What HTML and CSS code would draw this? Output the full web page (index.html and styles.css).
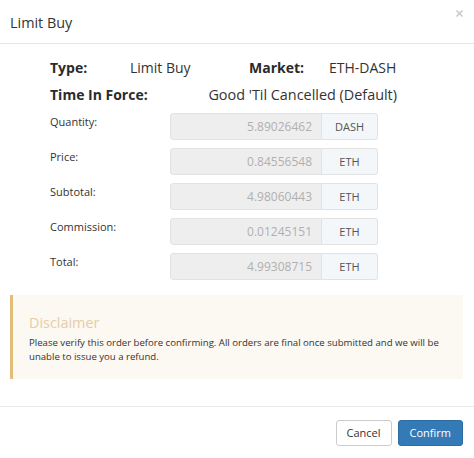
FILE: index.html
```html
<!DOCTYPE html>
<html lang="en">
<head>
<meta charset="utf-8">
<title>Limit Buy</title>
<link rel="stylesheet" href="styles.css">
</head>
<body>
<div class="modal">
  <div class="modal-header">
    <h4 class="modal-title">Limit Buy</h4>
    <span class="close" aria-label="Close">
      <svg width="7" height="7" viewBox="0 0 7 7"><path d="M0.5 0.5 L6.5 6.5 M6.5 0.5 L0.5 6.5" stroke="#c4c4c4" stroke-width="1.4" fill="none"/></svg>
    </span>
  </div>
  <div class="modal-body">
    <div class="summary">
      <div class="summary-row">
        <span class="key">Type:</span>
        <span class="val">Limit Buy</span>
        <span class="key">Market:</span>
        <span class="val">ETH-DASH</span>
      </div>
      <div class="summary-tif">
        <span class="key">Time In Force:</span>
        <span class="val">Good 'Til Cancelled (Default)</span>
      </div>
    </div>
    <div class="form">
      <div class="form-row">
        <span class="label">Quantity:</span>
        <div class="input-group"><span class="input">5.89026462</span><span class="addon">DASH</span></div>
      </div>
      <div class="form-row">
        <span class="label">Price:</span>
        <div class="input-group"><span class="input">0.84556548</span><span class="addon">ETH</span></div>
      </div>
      <div class="form-row">
        <span class="label">Subtotal:</span>
        <div class="input-group"><span class="input">4.98060443</span><span class="addon">ETH</span></div>
      </div>
      <div class="form-row">
        <span class="label">Commission:</span>
        <div class="input-group"><span class="input">0.01245151</span><span class="addon">ETH</span></div>
      </div>
      <div class="form-row">
        <span class="label">Total:</span>
        <div class="input-group"><span class="input">4.99308715</span><span class="addon">ETH</span></div>
      </div>
    </div>
    <div class="disclaimer">
      <h4 class="disclaimer-title">Disclaimer</h4>
      <p class="disclaimer-text">Please verify this order before confirming. All orders are final once submitted and we will be unable to issue you a refund.</p>
    </div>
  </div>
  <div class="modal-footer">
    <button class="btn btn-default">Cancel</button>
    <button class="btn btn-primary">Confirm</button>
  </div>
</div>
</body>
</html>
```

FILE: styles.css
```css
html, body {
  margin: 0;
  padding: 0;
  background: #fff;
}
body {
  font-family: "Open Sans", "DejaVu Sans", sans-serif;
  color: #333;
}
.modal {
  width: 474px;
}
.modal-header {
  height: 44px;
  box-sizing: border-box;
  padding: 0 11px 0 10px;
  border-bottom: 1px solid #e5e5e5;
  display: flex;
  justify-content: space-between;
  align-items: flex-start;
}
.modal-title {
  margin: 13px 0 0;
  font-size: 14.4px;
  line-height: 19px;
  font-weight: 400;
  color: #333;
}
.close {
  display: block;
  margin-top: 10px;
  width: 7px;
  height: 7px;
}
.close svg {
  display: block;
}
.modal-body {
  padding: 10px 11px 27px 10px;
}
.summary {
  margin-left: 40px;
  width: 347px;
  font-size: 14px;
  line-height: 27px;
  white-space: nowrap;
}
.summary-row {
  display: grid;
  grid-template-columns: 80px 119px 80px 1fr;
}
.summary-tif {
  display: flex;
  justify-content: space-between;
}
.summary-tif .val {
  font-size: 14.4px;
}
.key {
  font-weight: 700;
  color: #2b2b2b;
}
.val {
  color: #333;
}
.form {
  margin: 5px 0 0 40px;
  display: flex;
  flex-direction: column;
  gap: 8px;
}
.form-row {
  display: grid;
  grid-template-columns: 120px 208px;
}
.label {
  font-size: 11px;
  line-height: 15px;
  padding-top: 1px;
  color: #333;
}
.input-group {
  display: flex;
  height: 27px;
}
.input {
  flex: 1;
  box-sizing: border-box;
  background: #eeeeee;
  border: 1px solid #e2e2e2;
  border-radius: 3px 0 0 3px;
  font-size: 12px;
  line-height: 25px;
  text-align: right;
  padding-right: 9px;
  color: #b0b0b0;
}
.addon {
  width: 56px;
  box-sizing: border-box;
  background: #f4f7fa;
  border: 1px solid #e2e2e2;
  border-left: none;
  border-radius: 0 3px 3px 0;
  font-size: 11px;
  line-height: 25px;
  text-align: center;
  color: #555;
}
.disclaimer {
  margin-top: 15px;
  height: 84px;
  box-sizing: border-box;
  background: #fcf8f2;
  border-left: 3px solid #e4bd78;
  padding: 18px 10px 0 16px;
}
.disclaimer-title {
  margin: 0;
  font-size: 14.4px;
  line-height: 19px;
  font-weight: 400;
  color: #e7cda6;
}
.disclaimer-text {
  margin: 3.5px 0 0;
  font-size: 9.6px;
  line-height: 14.6px;
  color: #333;
}
.modal-footer {
  border-top: 1px solid #e8e8e8;
  padding: 13px 11px 0 10px;
  display: flex;
  justify-content: flex-end;
  gap: 6px;
}
.btn {
  height: 26px;
  box-sizing: border-box;
  font-family: "Open Sans", "DejaVu Sans", sans-serif;
  font-size: 11px;
  line-height: 24px;
  border-radius: 3px;
  border: 1px solid transparent;
  padding: 0 10px;
  cursor: pointer;
}
.btn-default {
  background: #fff;
  border-color: #ccc;
  color: #333;
}
.btn-primary {
  background: #337ab7;
  border-color: #2e6da4;
  color: #fff;
  padding: 0 11px;
}
```
